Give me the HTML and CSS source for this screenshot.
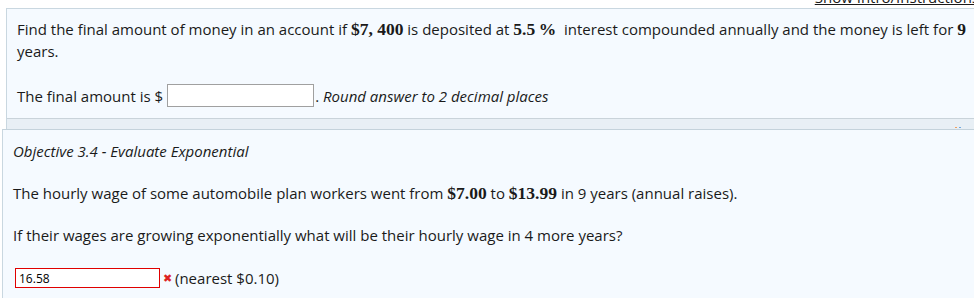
FILE: index.html
```html
<!DOCTYPE html>
<html lang="en">
<head>
    <meta charset="UTF-8">
    <meta name="viewport" content="width=device-width, initial-scale=1.0">
    <title>Question</title>
    <link rel="stylesheet" href="styles.css">
</head>
<body>
    <div class="topbar">
        <a href="#" class="intro-link">Show Intro/Instructions</a>
    </div>
    <div class="question">
        <div class="question-body">
            <p>Find the final amount of money in an account if <span class="math">$7, 400</span> is deposited at <span class="math">5.5&thinsp;%</span>&nbsp; interest compounded annually and the money is left for <span class="math">9</span> years.</p>
            <p class="answer-row">The final amount is $ <input type="text" class="answer"><span class="hint">. <em>Round answer to 2 decimal places</em></span></p>
        </div>
        <div class="question-footer">
            <span class="dots"><i class="dot orange"></i><i class="dot blue"></i></span>
        </div>
    </div>
    <div class="question second">
        <div class="question-body">
            <p class="objective"><em>Objective 3.4 - Evaluate Exponential</em></p>
            <p>The hourly wage of some automobile plan workers went from <span class="math">$7.00</span> to <span class="math">$13.99</span> in 9 years (annual raises).</p>
            <p>If their wages are growing exponentially what will be their hourly wage in 4 more years?</p>
            <p class="answer-row"><input type="text" class="answer wrong" value="16.58"><span class="mark">&#10006;</span> (nearest $0.10)</p>
        </div>
    </div>
</body>
</html>
```

FILE: styles.css
```css
body {
    margin: 0;
    background: #fff;
    font-family: "Open Sans", "Liberation Sans", sans-serif;
    font-size: 15px;
    color: #1a1a1a;
    overflow: hidden;
}
.topbar {
    height: 8px;
    display: flex;
    justify-content: flex-end;
    align-items: flex-end;
    margin-right: -5px;
}
.intro-link {
    line-height: 22px;
    color: #1a1a1a;
    text-decoration: underline;
    white-space: nowrap;
}
.question {
    margin-left: 6px;
    width: calc(100% + 20px);
    border: 1px solid #c9d7e0;
    border-bottom: none;
    background: #f5faff;
}
.question.second {
    margin-left: 2px;
    border-top: 1px solid #c4d2db;
}
.question-body {
    padding: 9px 10px 11px;
    line-height: 22px;
}
.question.second .question-body {
    padding-top: 10px;
}
.question p {
    margin: 0;
}
.question p + p {
    margin-top: 22px;
}
.question.second p + p {
    margin-top: 20px;
}
.question.second p.answer-row {
    margin-top: 21px;
}
.math {
    font-family: "Liberation Serif", "DejaVu Serif", serif;
    font-weight: bold;
    font-size: 17.5px;
}
.answer-row {
    display: flex;
    align-items: center;
    white-space: nowrap;
}
.answer {
    width: 147px;
    height: 23px;
    box-sizing: border-box;
    margin: 0 1px 0 4px;
    border: 1px solid #a0a0a0;
    background: #fff;
    padding: 0 3px;
    font-family: "Open Sans", sans-serif;
    font-size: 12px;
    color: #000;
}
.answer.wrong {
    width: 145px;
    height: 20px;
    margin: 0 0 0 2px;
    border-color: #e00000;
}
.mark {
    color: #d22;
    font-size: 11px;
    margin: 0 3px 0 3px;
}
.question-footer {
    height: 10px;
    border-top: 1px solid #c9d3da;
    background: #e8eff5;
    display: flex;
    justify-content: flex-end;
    align-items: flex-end;
    padding-right: 40px;
}
.dots {
    display: flex;
    gap: 2px;
    margin-bottom: 1px;
}
.dot {
    width: 2px;
    height: 1px;
}
.dot.orange {
    background: #f0a060;
}
.dot.blue {
    background: #70a8e0;
}
```
